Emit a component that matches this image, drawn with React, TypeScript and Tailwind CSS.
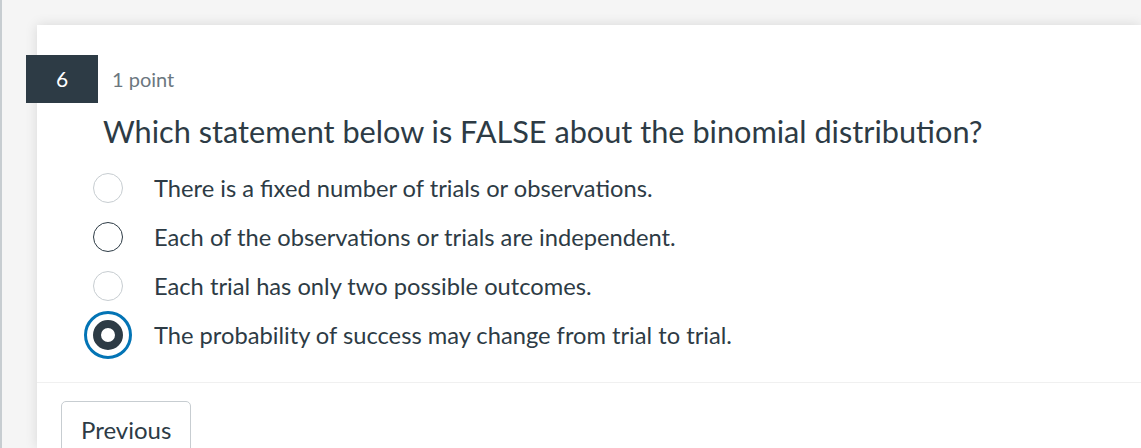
import { useState } from "react";

const options = [
  "There is a fixed number of trials or observations.",
  "Each of the observations or trials are independent.",
  "Each trial has only two possible outcomes.",
  "The probability of success may change from trial to trial.",
];

export default function App() {
  const [selected] = useState(3);
  const hovered = 1;

  return (
    <div
      className="w-full h-[448px] overflow-hidden bg-[#f5f5f5] border-l-2 border-[#c7cdd1] pl-[35px] pt-[25px] flex"
      style={{ fontFamily: "Lato, 'Open Sans', sans-serif" }}
    >
      <div className="flex-1 bg-white shadow-[0_0_12px_rgba(0,0,0,0.12)] flex flex-col">
        {/* Question header */}
        <div className="flex items-center pt-[30px] -ml-[11px]">
          <div className="w-[72px] h-[48px] bg-[#2d3b45] text-white text-[21px] flex items-center justify-center">
            6
          </div>
          <span className="ml-[14px] text-[20px] text-[#6b7780]">1 point</span>
        </div>

        <div className="pl-[66px] pt-[8px]">
          <h2 className="text-[30.7px] text-[#2d3b45] leading-[42px]">
            Which statement below is FALSE about the binomial distribution?
          </h2>

          <ul className="mt-[10px] flex flex-col">
            {options.map((opt, i) => (
              <li key={i} className="h-[49px] flex items-center">
                <div className="w-[48px] h-[48px] -ml-[19px] flex items-center justify-center">
                  {selected === i ? (
                    <div className="w-[48px] h-[48px] rounded-full border-[3px] border-[#0374b5] flex items-center justify-center">
                      <div className="w-[30px] h-[30px] rounded-full border-[8px] border-[#2d3b45] bg-white" />
                    </div>
                  ) : (
                    <div
                      className={
                        hovered === i
                          ? "w-[30px] h-[30px] rounded-full border-[1.5px] border-[#2d3b45] bg-white"
                          : "w-[30px] h-[30px] rounded-full border-[1.5px] border-[#c7cdd1] bg-white"
                      }
                    />
                  )}
                </div>
                <span className="ml-[22px] text-[23.7px] leading-[30px] text-[#2d3b45]">{opt}</span>
              </li>
            ))}
          </ul>
        </div>

        <div className="mt-[23px] border-t border-[#f0f0f0] pt-[18px] pl-[24px]">
          <button className="h-[56px] px-[19px] border border-[#c7cdd1] rounded-[5px] bg-white text-[24px] text-[#2d3b45] flex items-start pt-[10px]">
            Previous
          </button>
        </div>
      </div>
    </div>
  );
}
